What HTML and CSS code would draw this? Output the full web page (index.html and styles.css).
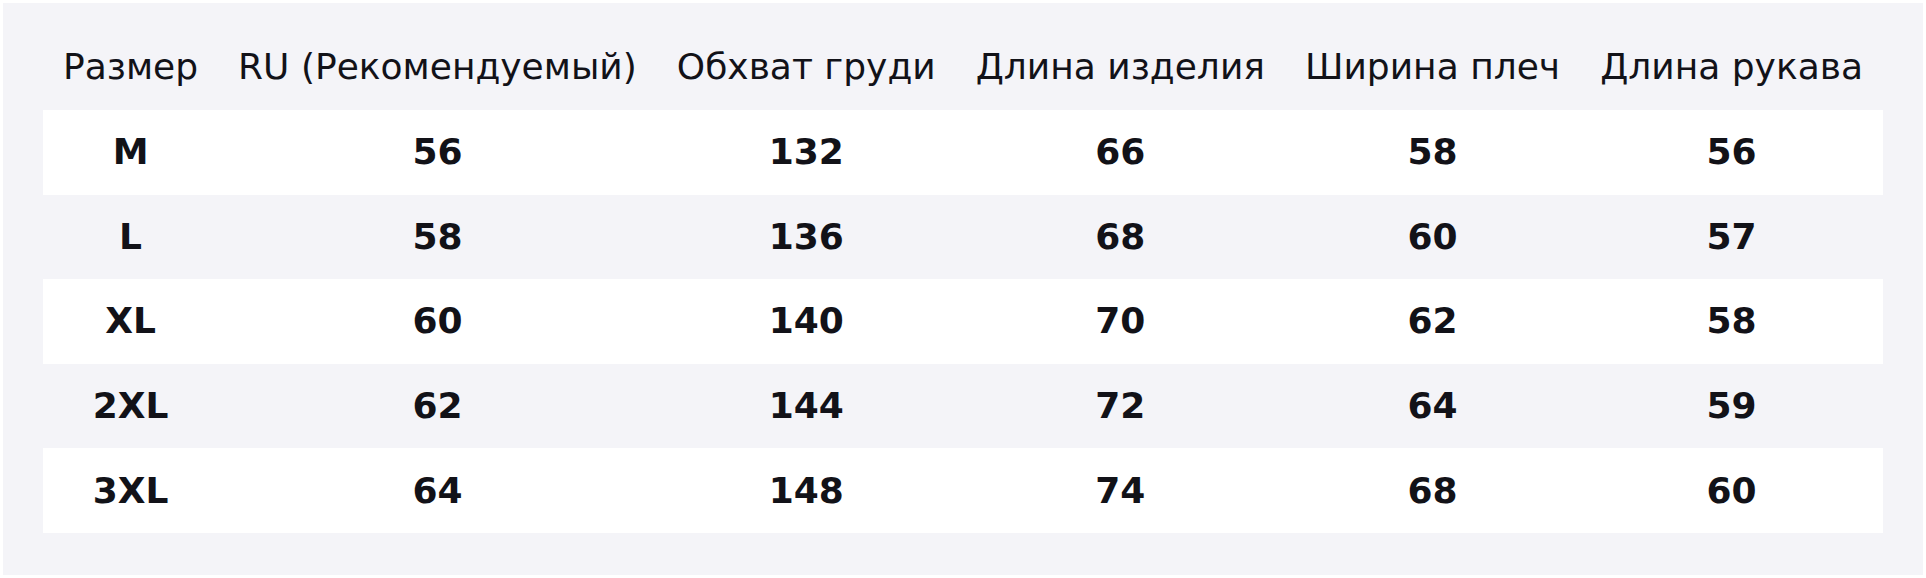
FILE: index.html
```html
<!DOCTYPE html>
<html lang="ru">
<head>
<meta charset="utf-8">
<title>Таблица размеров</title>
<link rel="stylesheet" href="styles.css">
</head>
<body>
<div class="panel">
  <table class="sizes">
    <thead>
      <tr>
        <th>Размер</th>
        <th>RU (Рекомендуемый)</th>
        <th>Обхват груди</th>
        <th>Длина изделия</th>
        <th>Ширина плеч</th>
        <th>Длина рукава</th>
      </tr>
    </thead>
    <tbody>
      <tr><td>M</td><td>56</td><td>132</td><td>66</td><td>58</td><td>56</td></tr>
      <tr><td>L</td><td>58</td><td>136</td><td>68</td><td>60</td><td>57</td></tr>
      <tr><td>XL</td><td>60</td><td>140</td><td>70</td><td>62</td><td>58</td></tr>
      <tr><td>2XL</td><td>62</td><td>144</td><td>72</td><td>64</td><td>59</td></tr>
      <tr><td>3XL</td><td>64</td><td>148</td><td>74</td><td>68</td><td>60</td></tr>
    </tbody>
  </table>
</div>
</body>
</html>
```
FILE: styles.css
```css
html, body {
  margin: 0;
  padding: 0;
  background: #ffffff;
}
body {
  padding: 3px;
  font-family: "DejaVu Sans", sans-serif;
  color: #121218;
}
.panel {
  width: 1920px;
  height: 572px;
  box-sizing: border-box;
  background: #f4f4f8;
  padding: 40px 40px 0 40px;
}
.sizes {
  width: 100%;
  border-collapse: collapse;
  border-spacing: 0;
}
.sizes th {
  font-size: 36px;
  font-weight: normal;
  line-height: 42px;
  padding: 3px 20px 22px;
  text-align: center;
  white-space: nowrap;
  vertical-align: top;
}
.sizes td {
  font-size: 36px;
  font-weight: bold;
  line-height: 42px;
  height: 84.6px;
  box-sizing: border-box;
  padding: 0 20px;
  text-align: center;
  vertical-align: middle;
}
.sizes tbody tr:nth-child(odd) {
  background: #ffffff;
}
```
